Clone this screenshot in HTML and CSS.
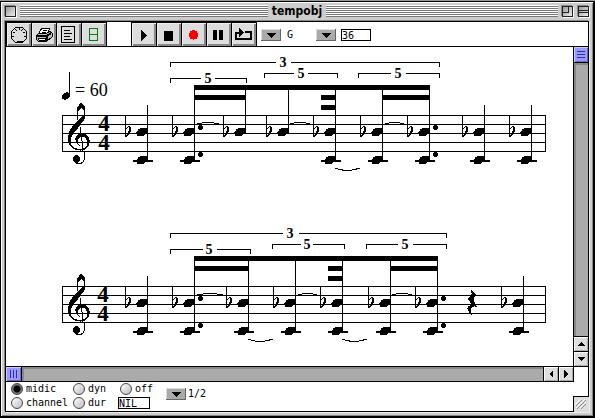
FILE: index.html
```html
<!DOCTYPE html>
<html lang="en">

<head>
    <meta charset="UTF-8">
    <meta name="viewport" content="width=device-width, initial-scale=1.0">
    <title>tempobj</title>
    <link rel="stylesheet" href="styles.css">
</head>

<body>
    <div class="window">
        <header class="titlebar">
            <div class="titlebar-side">
                <button class="box" aria-label="Close"></button>
                <div class="stripes"></div>
            </div>
            <h1>tempobj</h1>
            <div class="titlebar-side">
                <div class="stripes"></div>
                <button class="box box-zoom" aria-label="Zoom">
                    <svg width="9" height="9" viewBox="0 0 9 9"><path d="M0 5.5H5.5V0" /></svg>
                </button>
                <button class="box" aria-label="Collapse">
                    <svg width="9" height="9" viewBox="0 0 9 9"><path d="M0 3.5H9M0 5.5H9" /></svg>
                </button>
            </div>
        </header>

        <main class="content">
            <div class="toolbar">
                <div class="tools">
                    <button aria-label="MIDI">
                        <svg width="18" height="18" viewBox="0 0 18 18" fill="none" stroke="#000">
                            <circle cx="9" cy="9" r="8" />
                            <path d="M9 2V4M5.5 3L6.5 5M12.5 3L11.5 5M3 6L5 7M15 6L13 7M2 10H4M14 10H16M7 17V15H11V17" />
                        </svg>
                    </button>
                    <button aria-label="Print">
                        <svg width="18" height="18" viewBox="0 0 18 18" stroke="#000">
                            <path fill="#fff" d="M4 7L7 2H15L12 8Z" />
                            <path d="M7.5 4H12M6.5 6H11" />
                            <path fill="#bbb" d="M1 10L4 7H12L15 5L17 7V11L12 15H3L1 13Z" />
                            <path fill="none" stroke-width="2" d="M1 10H12V15M12 10L16 7" />
                            <path fill="#fff" d="M3 12H10V14H4Z" />
                        </svg>
                    </button>
                    <button aria-label="Page view">
                        <svg width="18" height="18" viewBox="0 0 18 18" fill="none" stroke="#000">
                            <rect x="1.5" y="0.5" width="13" height="16" />
                            <path d="M4 4.5H10M4 7.5H12M4 10.5H10M4 13.5H12" />
                        </svg>
                    </button>
                    <button aria-label="Split view">
                        <svg width="18" height="18" viewBox="0 0 18 18" fill="none" stroke="#087a18">
                            <path d="M4.5 2.5H12.5V14.5H4.5ZM4.5 8.5H12.5" />
                        </svg>
                    </button>
                </div>
                <div class="tools">
                    <button aria-label="Play">
                        <svg width="18" height="18" viewBox="0 0 18 18"><path d="M6 4L12 9.5L6 15Z" /></svg>
                    </button>
                    <button aria-label="Stop">
                        <svg width="18" height="18" viewBox="0 0 18 18"><path d="M4 5H13V15H4Z" /></svg>
                    </button>
                    <button aria-label="Record">
                        <svg width="18" height="18" viewBox="0 0 18 18"><circle cx="8.5" cy="9" r="4.7" fill="#f00" /></svg>
                    </button>
                    <button aria-label="Pause">
                        <svg width="18" height="18" viewBox="0 0 18 18"><path d="M3 4H7V14H3ZM9 4H13V14H9Z" /></svg>
                    </button>
                    <button aria-label="Loop">
                        <svg width="18" height="18" viewBox="0 0 18 18">
                            <path fill="none" stroke="#000" stroke-width="2" d="M6 7H1V13H16V6H10" />
                            <path d="M4 2L9 6.5L4 11Z" />
                        </svg>
                    </button>
                </div>
                <div class="fields">
                    <select class="popup popup-key" aria-label="Key">
                        <option>G</option>
                        <option>F</option>
                        <option>GF</option>
                    </select>
                    <select class="popup" aria-label="Size list">
                        <option>36</option>
                        <option>24</option>
                        <option>18</option>
                    </select>
                    <input class="field" type="text" value="36" aria-label="Font size">
                </div>
            </div>

            <div class="editor">
                <div class="score">
                    <svg width="567" height="319" viewBox="6 47 567 319" role="img" aria-label="Two voices in 4/4">
                        <defs>
                            <ellipse id="head" cx="-6" cy="1" rx="6" ry="4" transform="rotate(-25 -6 1)" />
                            <g id="flat">
                                <path d="M-23 -16H-22V6H-23Z" />
                                <path d="M-22 -3L-20 -5H-18L-17 -3V0L-19 3L-22 6V4L-20 2L-19 -1V-3L-20 -4L-22 -2Z" />
                            </g>
                            <g id="upper">
                                <use href="#head" />
                                <use href="#flat" />
                            </g>
                            <!-- flat and two heads, the low one on its ledger line -->
                            <g id="chord">
                                <use href="#upper" />
                                <use href="#head" y="28" />
                                <path d="M-15 29H5V31H-15Z" />
                            </g>
                            <g id="dots">
                                <circle cx="6.5" cy="-3.500" r="2.500" />
                                <circle cx="6.5" cy="23.500" r="2.500" />
                            </g>
                            <g id="staff">
                                <path class="line" d="M62 115.5H546M62 124.5H546M62 133.5H546M62 142.5H546M62 151.5H546M62.5 115V152M545.5 115V152" />
                                <path d="M84 114V120C81 125 77 129 74 133C71 137 70 140 71 144C73 148 77 149 81 149C86 149 88 145 87 141C86 137 82 135 79 138C77 141 78 144 80 146C76 144 74 140 76 136C79 131 86 132 89 137C91 142 89 148 84 150C77 152 70 148 68 142C67 134 70 129 75 123C80 118 83 117 84 114Z" />
                                <path d="M81 102L85 107L84 110L81 108L78 111L77 108Z" />
                                <path class="line" d="M78 108C77 112 77 116 77.500 120M84.500 108V119M80 127V132L82.500 143V151L84.500 152V159C83 164 78 165 75 162" />
                                <ellipse cx="76.500" cy="159" rx="3.500" ry="4" />
                            </g>
                        </defs>

                        <!-- tempo mark -->
                        <ellipse cx="66" cy="96" rx="4.500" ry="3.200" transform="rotate(-25 66 96)" />
                        <path d="M69 72H70V96H69Z" />
                        <text class="tempo" x="75" y="96">= 60</text>

                        <!-- first voice -->
                        <use href="#staff" />
                        <text class="meter"><tspan x="104" y="131">4</tspan><tspan x="104" y="150">4</tspan></text>

                        <path class="line" d="M170.500 67V62.500H276M291 62.500H439.500V67" />
                        <text class="tuplet" x="283" y="67">3</text>
                        <path class="line" d="M170.500 83V78.500H201M215 78.500H246.500V83" />
                        <text class="tuplet" x="208" y="83">5</text>
                        <path class="line" d="M264.500 78V73.500H294M308 73.500H337.500V78" />
                        <text class="tuplet" x="301" y="78">5</text>
                        <path class="line" d="M358.500 78V73.500H391M406 73.500H439.500V78" />
                        <text class="tuplet" x="398" y="78">5</text>

                        <path d="M194 85H430V90H194ZM194 95H246V100H194ZM321 95H336V100H321ZM321 105H336V110H321ZM382 95H430V100H382Z" />
                        <path class="line" d="M147.500 105V161M194.500 85V161M245.500 85V133M288.500 85V133M335.500 85V161M382.500 85V161M429.500 85V161M484.500 105V161M531.500 105V161" />
                        <use href="#chord" x="148" y="131" />
                        <use href="#chord" x="195" y="131" />
                        <use href="#upper" x="246" y="131" />
                        <use href="#upper" x="289" y="131" />
                        <use href="#chord" x="336" y="131" />
                        <use href="#chord" x="383" y="131" />
                        <use href="#chord" x="430" y="131" />
                        <use href="#chord" x="485" y="131" />
                        <use href="#chord" x="532" y="131" />
                        <use href="#dots" x="194" y="131" />
                        <use href="#dots" x="429" y="131" />
                        <path class="line" d="M197 124Q208 121 219 124M290 124Q300 121 310 124M385 124Q394 121 404 124M335 168Q347 173 360 168" />

                        <!-- second voice -->
                        <use href="#staff" y="171" />
                        <text class="meter"><tspan x="103" y="302">4</tspan><tspan x="103" y="321">4</tspan></text>

                        <path class="line" d="M170.500 238V233.500H283M299 233.500H446.500V238" />
                        <text class="tuplet" x="290" y="238">3</text>
                        <path class="line" d="M170.500 254V249.500H203M217 249.500H250.500V254" />
                        <text class="tuplet" x="209" y="254">5</text>
                        <path class="line" d="M272.500 249V244.500H301M313 244.500H344.500V249" />
                        <text class="tuplet" x="307" y="249">5</text>
                        <path class="line" d="M366.500 249V244.500H398M413 244.500H446.500V249" />
                        <text class="tuplet" x="405" y="249">5</text>

                        <path d="M194 256H438V261H194ZM194 266H249V271H194ZM328 266H343V271H328ZM328 276H343V281H328ZM390 266H438V271H390Z" />
                        <path class="line" d="M147.500 276V332M194.500 256V332M248.500 256V332M295.500 256V332M342.500 256V332M390.500 256V332M437.500 256V332M523.500 276V332" />
                        <use href="#chord" x="148" y="302" />
                        <use href="#chord" x="195" y="302" />
                        <use href="#chord" x="249" y="302" />
                        <use href="#chord" x="296" y="302" />
                        <use href="#chord" x="343" y="302" />
                        <use href="#chord" x="391" y="302" />
                        <use href="#chord" x="438" y="302" />
                        <use href="#chord" x="524" y="302" />
                        <use href="#dots" x="194" y="302" />
                        <use href="#dots" x="437" y="302" />
                        <path class="line" d="M197 295Q210 292 223 295M298 295Q308 292 317 295M392 295Q402 292 412 295M248 339Q260 344 273 339M342 339Q354 344 367 339" />
                        <!-- quarter rest -->
                        <path d="M470 288L476 295C473 299 473 301 477 307C472 305 470 308 472 315C466 311 466 305 472 305L468 299C473 295 472 292 470 288Z" />
                    </svg>
                </div>

                <div class="scroller scroller-v">
                    <div class="thumb">
                        <svg width="8" height="8" viewBox="0 0 8 8"><path d="M0 .5H8M0 3.500H8M0 6.500H8" /></svg>
                    </div>
                    <div class="track"></div>
                    <button aria-label="Scroll up"><svg width="8" height="4" viewBox="0 0 8 4"><path d="M0 4L4 0L8 4Z" /></svg></button>
                    <button aria-label="Scroll down"><svg width="8" height="4" viewBox="0 0 8 4"><path d="M0 0H8L4 4Z" /></svg></button>
                </div>

                <div class="scroller scroller-h">
                    <div class="thumb">
                        <svg width="8" height="8" viewBox="0 0 8 8"><path d="M.5 0V8M3.500 0V8M6.500 0V8" /></svg>
                    </div>
                    <div class="track"></div>
                    <button aria-label="Scroll left"><svg width="4" height="8" viewBox="0 0 4 8"><path d="M4 0V8L0 4Z" /></svg></button>
                    <button aria-label="Scroll right"><svg width="4" height="8" viewBox="0 0 4 8"><path d="M0 0L4 4L0 8Z" /></svg></button>
                </div>
                <div class="corner"></div>
            </div>

            <footer class="panel">
                <div class="options">
                    <label><input type="radio" name="param" checked>midic</label>
                    <label><input type="radio" name="param">dyn</label>
                    <label class="off"><input type="radio" name="param">off</label>
                    <label><input type="radio" name="param">channel</label>
                    <label><input type="radio" name="param">dur</label>
                    <input class="field" type="text" value="NIL" aria-label="Value">
                </div>
                <select class="popup popup-unit" aria-label="Unit">
                    <option>1/2</option>
                    <option>1/4</option>
                    <option>1/8</option>
                </select>
                <div class="grow">
                    <svg width="12" height="12" viewBox="0 0 12 12" fill="none">
                        <path stroke="#fff" d="M0 7L6 1M1 10L10 1M5 10L11 4" />
                        <path stroke="#888" d="M1 8L7 2M2 11L11 2M6 11L11 6" />
                    </svg>
                </div>
            </footer>
        </main>
    </div>
</body>

</html>
```
FILE: styles.css
```css
* {
    box-sizing: border-box;
}

body {
    margin: 0;
    padding-top: 1px;
    height: 100vh;
    background: #9a9c94;
    color: #000;
    font-family: "DejaVu Sans Mono", monospace;
    font-size: 10px;
    line-height: 12px;
}

svg {
    display: block;
    flex: none;
    shape-rendering: crispEdges;
}

button {
    display: flex;
    align-items: center;
    justify-content: center;
    flex: none;
    margin: 0;
    padding: 0;
    border: none;
    border-radius: 0;
    background: #ddd;
}

.window {
    display: flex;
    flex-direction: column;
    height: 100%;
    padding: 0 4px 4px;
    border: 1px solid #000;
    border-width: 1px 2px 2px 1px;
    background: #ccc;
    box-shadow: inset 1px 1px #fff, inset -1px -1px #888;
}

/* title bar */
.titlebar {
    display: grid;
    grid-template-columns: 1fr auto 1fr;
    align-items: center;
    gap: 4px;
    height: 19px;
    padding-bottom: 1px;
}

.titlebar h1 {
    margin: 0;
    font: bold 12px/14px "DejaVu Sans Condensed", "DejaVu Sans", sans-serif;
}

.titlebar-side {
    display: flex;
    align-items: center;
    gap: 4px;
}

.stripes {
    flex: 1;
    height: 12px;
    background: repeating-linear-gradient(#fff 0 1px, #777 1px 2px);
}

.box {
    width: 11px;
    height: 11px;
    border: 1px solid #222;
    background: linear-gradient(135deg, #999, #eee);
    box-shadow: 1px 1px #fff, -1px -1px #888;
}

.box-zoom {
    margin-right: 1px;
}

.box path {
    fill: none;
    stroke: #222;
}

/* document frame */
.content {
    display: flex;
    flex-direction: column;
    flex: 1;
    min-height: 0;
    border: 1px solid #000;
    background: #fff;
    box-shadow: -1px -1px #888, 1px 1px #eee;
}

.toolbar {
    display: flex;
    height: 25px;
    border-bottom: 1px solid #000;
}

.tools {
    display: flex;
    gap: 1px;
    padding: 1px 1px 0;
    background: #000;
}

.tools + .tools {
    margin-left: 24px;
}

.tools button {
    width: 24px;
    height: 23px;
    box-shadow: inset 1px 1px #eee, inset -2px -2px #888;
}

.fields {
    display: flex;
    align-items: center;
    padding: 2px 0 0 4px;
}

.popup {
    appearance: none;
    width: 20px;
    height: 12px;
    margin: 0;
    padding: 0;
    border: none;
    border-radius: 0;
    background: url("data:image/svg+xml,%3Csvg xmlns='http://www.w3.org/2000/svg' width='20' height='12' shape-rendering='crispEdges'%3E%3Cpath fill='%23666' d='M0 0H20V12H0Z'/%3E%3Cpath fill='%23ddd' d='M0 0H19V11H0Z'/%3E%3Cpath fill='%23aaa' d='M1 1H19V11H1Z'/%3E%3Cpath d='M5 4H15L10 9Z'/%3E%3C/svg%3E") no-repeat left top;
    color: transparent;
    font: inherit;
    overflow: hidden;
}

.popup option {
    color: #000;
}

.popup:not(.popup-key):not(.popup-unit) {
    padding-left: 20px;
}

.popup-key {
    width: 49px;
    margin-right: 6px;
    padding-left: 26px;
    color: #000;
}

.popup-unit {
    width: 48px;
    padding-left: 22px;
    color: #000;
}

.field {
    width: 30px;
    height: 12px;
    margin: 0;
    padding: 0;
    border: 1px solid #000;
    border-radius: 0;
    background: #fff;
    color: #000;
    font: inherit;
    line-height: 10px;
}

.fields .field {
    margin-left: 5px;
}

/* score and scroll bars */
.editor {
    display: grid;
    grid-template-columns: 1fr 15px;
    grid-template-rows: 1fr 16px;
    flex: 1;
    min-height: 0;
}

.score {
    min-width: 0;
    min-height: 0;
    overflow: hidden;
}

.line {
    fill: none;
    stroke: #000;
    stroke-width: 1px;
}

.tempo,
.meter,
.tuplet {
    font-family: "Liberation Serif", serif;
}

.tempo {
    font-size: 18px;
}

.meter {
    font-size: 23px;
    font-weight: bold;
    text-anchor: middle;
}

.tuplet {
    font-size: 14px;
    font-weight: bold;
    text-anchor: middle;
}

.scroller {
    display: flex;
    min-width: 0;
    min-height: 0;
}

.scroller-v {
    flex-direction: column;
    border-left: 1px solid #000;
}

.scroller-h {
    border: 1px solid #000;
    border-width: 1px 0;
}

.thumb {
    display: flex;
    align-items: center;
    justify-content: center;
    background: #99f;
    box-shadow: inset 1px 1px #ccf, inset -1px -1px #66c;
}

.thumb path {
    stroke: #339;
}

.scroller-v .thumb {
    height: 15px;
}

.scroller-h .thumb {
    width: 15px;
}

.track {
    flex: 1;
    background: #aaa;
    box-shadow: inset 2px 2px #888;
}

.scroller-v .track {
    border-top: 1px solid #000;
}

.scroller-h .track {
    border-left: 1px solid #000;
}

.scroller button {
    box-shadow: inset 1px 1px #fff, inset -1px -1px #aaa;
}

.scroller-v button {
    height: 15px;
    border-top: 1px solid #000;
}

.scroller-h button {
    width: 15px;
    border-left: 1px solid #000;
}

.corner {
    border: 1px solid #000;
    border-width: 1px 0 0 1px;
}

/* bottom panel */
.panel {
    display: flex;
    height: 29px;
    padding-left: 5px;
}

.options {
    display: grid;
    grid-template-columns: 62px 45px 48px;
    grid-auto-rows: 14px;
    align-items: center;
}

.options label {
    display: flex;
    align-items: center;
    gap: 3px;
}

.options .off {
    padding-left: 2px;
}

.options .field {
    width: 32px;
}

.options input[type="radio"] {
    appearance: none;
    flex: none;
    width: 12px;
    height: 12px;
    margin: 0;
    border: 1px solid #444;
    border-radius: 50%;
    background: linear-gradient(135deg, #fff, #bbb);
}

.options input[type="radio"]:checked {
    background: radial-gradient(#000 3px, #777 4px);
}

.panel .popup {
    margin-top: 6px;
}

.grow {
    width: 16px;
    height: 16px;
    margin: auto -1px -1px auto;
    padding: 1px;
    border: 1px solid #000;
    border-width: 1px 0 0 1px;
    background: #ddd;
}
```
